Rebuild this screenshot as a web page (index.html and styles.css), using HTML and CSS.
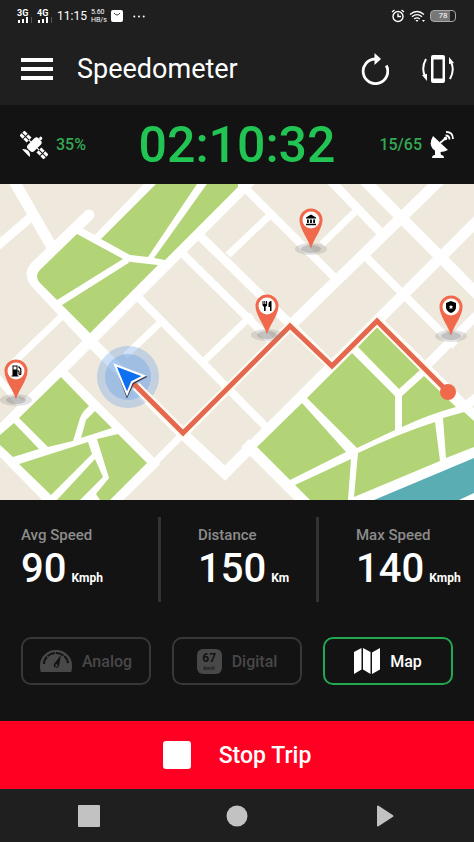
FILE: index.html
```html
<!DOCTYPE html>
<html lang="en">
<head>
  <meta charset="UTF-8">
  <meta name="viewport" content="width=device-width, initial-scale=1.0">
  <title>Speedometer</title>
  <link rel="stylesheet" href="styles.css">
</head>
<body>
  <div class="status-bar">
    <div class="status-group">
      <div class="signal">
        <span>3G</span>
        <svg width="16" height="6" viewBox="0 0 16 6"><path d="M1 3h2v3H1zM5 2h2v4H5zM9 0h2v6H9z" fill="#fff"/><path d="M14 0h1v6h-1z" fill="#555"/></svg>
      </div>
      <div class="signal">
        <span>4G</span>
        <svg width="16" height="6" viewBox="0 0 16 6"><path d="M1 3h2v3H1zM5 2h2v4H5zM9 0h2v6H9z" fill="#fff"/><path d="M14 0h1v6h-1z" fill="#555"/></svg>
      </div>
      <span class="clock">11:15</span>
      <div class="net-speed"><span>5.60</span><span>HB/s</span></div>
      <svg class="bag" width="12" height="12" viewBox="0 0 12 12"><rect width="12" height="12" rx="2" fill="#fff"/><path d="M3 3q3 4 6 0" fill="none" stroke="#333"/></svg>
      <svg width="12" height="3" viewBox="0 0 12 3" fill="#fff"><circle cx="1.3" cy="1.5" r="1"/><circle cx="6" cy="1.5" r="1"/><circle cx="10.7" cy="1.5" r="1"/></svg>
    </div>
    <div class="status-group">
      <svg width="14" height="14" viewBox="0 0 14 14" fill="none" stroke="#fff" stroke-width="1.4"><circle cx="7" cy="7.5" r="5"/><path d="M7 4.5v3h3M1 3l2.500-2M13 3l-2.500-2"/></svg>
      <svg width="17" height="13" viewBox="0 0 17 13" fill="none" stroke="#fff" stroke-width="1.3"><path d="M1 4.500q7-6 14 0M3 6.800q5-4.200 10 0M5.200 9q2.800-2.400 5.600 0"/><path d="M6.500 10h3L8 12zM13 10h3l-1.500 2z" fill="#fff" stroke="none"/></svg>
      <div class="battery">78</div>
    </div>
  </div>

  <header class="header">
    <button class="icon-btn" aria-label="Menu">
      <svg width="32" height="22" viewBox="0 0 32 22" fill="#fff"><path d="M0 0h32v4H0zM0 9h32v4H0zM0 18h32v4H0z"/></svg>
    </button>
    <h1>Speedometer</h1>
    <button class="icon-btn" aria-label="Reset">
      <svg width="28" height="32" viewBox="0 0 28 32"><path d="M25.300 12.500A12.300 12.300 0 1 1 14 6" fill="none" stroke="#fff" stroke-width="2.800"/><path d="M13.500 0l6.500 6-6.500 6z" fill="#fff"/></svg>
    </button>
    <button class="icon-btn" aria-label="Rotate screen">
      <svg width="32" height="28" viewBox="0 0 32 28"><path d="M11 0h10q2 0 2 2v24q0 2-2 2H11q-2 0-2-2V2q0-2 2-2zM11.500 4.500v19h9v-19z" fill="#fff" fill-rule="evenodd"/><path d="M4 4q-5 9-1 17M28 24q5-9 1-17" fill="none" stroke="#fff" stroke-width="2"/><path d="M0 20l5-1v7zM32 8l-5 1V2z" fill="#fff"/></svg>
    </button>
  </header>

  <section class="trip-time">
    <div class="signal-info">
      <svg width="28" height="28" viewBox="0 0 28 28" fill="#fff">
        <g transform="rotate(45 14 14)">
          <path d="M-3 10.500h4.500v3H-3zM-3 14.500h4.500v3H-3zM2.500 10.500H7v3H2.500zM2.500 14.500H7v3H2.500zM21 10.500h4.500v3H21zM21 14.500h4.500v3H21zM26.500 10.500H31v3h-4.500zM26.500 14.500H31v3h-4.500z"/>
          <path d="M7 13.500h14v1H7z"/>
          <rect x="9.500" y="6" width="9" height="15" rx="3"/>
          <path d="M9 24.500q5-5 10 0v1H9z"/>
          <circle cx="14" cy="4.500" r="1.600"/>
        </g>
      </svg>
      <span>35%</span>
    </div>
    <time class="timer">02:10:32</time>
    <div class="signal-info">
      <span>15/65</span>
      <svg width="24" height="28" viewBox="0 0 24 28" fill="#fff">
        <path d="M3 5q-5 9 1 14 6 4 14 0z"/>
        <path d="M5 18h5l1 6q3 0 3 3H2q0-3 3-3z"/>
        <path d="M10 12l6-5M15.500 4.500q4 0 4 4M16 .900q7 0 7 7" fill="none" stroke="#fff" stroke-width="1.800"/>
        <circle cx="15.500" cy="7.500" r="1.800"/>
      </svg>
    </div>
  </section>

  <svg class="map" viewBox="0 0 474 316" role="img" aria-label="Trip map">
    <defs>
      <g id="pin">
        <ellipse cy="29" rx="16" ry="6" fill="#8a8a8a" opacity=".25"/>
        <ellipse cy="29" rx="10" ry="4" fill="#777" opacity=".3"/>
        <path d="M0 28.500C-2 20-11.500 9-11.500 0a11.500 11.500 0 0 1 23 0C11.500 9 2 20 0 28.500z" fill="#f0694c"/>
        <circle r="8.500" fill="#fff"/>
      </g>
    </defs>

    <rect width="474" height="316" fill="#eee8dd"/>

    <!-- park and shore ground -->
    <g fill="#fff">
      <path d="M61 188L153 280 116 318 46 320-4 269v-20z"/>
      <path d="M377 137L480 238v80H304L247 261z"/>
    </g>

    <!-- streets -->
    <g fill="none" stroke="#fff">
      <g stroke-width="11">
        <path d="M14-3L53 65M440-4L291 141M480 34L225 289 183 250M364-4L480 113M255-8L-4 251"/>
        <path d="M89 31L36 82Q28 90 36 99L90 157 183 250" stroke-linecap="round"/>
        <path d="M377 137L480 238M245 259L304 318"/>
      </g>
      <g stroke-width="9">
        <path d="M-4 63L31 33M152-2L98 54M198 50L291 141 332 182M330-4L382 50M291 141L183 250M61 187L154 280 114 319"/>
        <path d="M480 128L399 209M480 211L460 226"/>
      </g>
      <g stroke-width="8">
        <path d="M183 70L273 159M79 47L128 73 163 79M203-2L151 74M127 76L60 118"/>
        <path d="M138 113L266 243M240-1L336 95M365 72L455 162"/>
      </g>
      <g stroke-width="7">
        <path d="M228 71L269 32M355 28L322 60M162 137L125 172M252 131L202 179M62 132L12 180M-4 192L20 220M183 250L153 280"/>
      </g>
    </g>

    <!-- parks -->
    <g fill="#b2d476">
      <path d="M156 0H197L148 73 130 71 101 55z"/>
      <path d="M207 0H238V3L165 76 154 74z"/>
      <path d="M77 50L123 75 57 116 40 99Q34 92 40 86z"/>
      <path d="M130 78L158 81 90 149 62 121z"/>
      <path d="M61 193L89 222Q82 228 80 234L73 257 48 263 19 234z"/>
      <path d="M95 227L112 244 81 254 86 236z"/>
      <path d="M14 239L39 265 13 273 0 261V251z"/>
      <path d="M19 280L88 258 92 270 51 311z"/>
      <path d="M97 255L118 250 147 279 110 316H100L96 310 109 294z"/>
      <path d="M95 275L103 293 80 316H57z"/>
      <path d="M352 169L395 212V246L357 264 307 214z"/>
      <path d="M377 143L420 186 399 205 358 163z"/>
      <path d="M424 192L456 223Q430 230 402 243V212z"/>
      <path d="M302 219L346 268 290 296 257 263z"/>
      <path d="M351 275L348 316H310L295 301z"/>
      <path d="M358 269Q398 250 435 238L440 277 354 313z"/>
      <path d="M443 234L464 228 474 237V263L446 274z"/>
    </g>
    <path d="M474 274V309L459 316H374Z" fill="#5aaeb3"/>

    <!-- current position -->
    <circle cx="128" cy="193" r="31" fill="#6fa3e6" opacity=".35"/>
    <circle cx="128" cy="193" r="23" fill="#6fa3e6" opacity=".4"/>

    <!-- route -->
    <g fill="none">
      <path d="M136 202L183 249 290 142 332 182 377 137 448 208" stroke="#fffaf0" stroke-width="9"/>
      <path d="M132 198L183 249 290 142 332 182 377 137 448 208" stroke="#e5674d" stroke-width="5"/>
    </g>
    <circle cx="448" cy="208" r="8" fill="#f0694c"/>

    <path d="M116 182L145 193 133 199 127 212z" fill="#334" stroke="#334" stroke-width="2"/>
    <path d="M115 181L144 192 132 198 127 210z" fill="#0d6ff2" stroke="#fff" stroke-width="2"/>

    <!-- places -->
    <g transform="translate(311 36)">
      <use href="#pin"/>
      <path d="M-5-2.500L0-5.500 5-2.500v1H-5zM-4-.500h1.800v3.500H-4zM-.900-.500H.900v3.500H-.900zM2.200-.500H4v3.500H2.200zM-5 3.800H5v1.400H-5z"/>
    </g>
    <g transform="translate(267 122)">
      <use href="#pin"/>
      <path d="M-4.500-5h1v3h.800v-3h1v3h.800v-3h1v4q0 1.300-1.500 1.800V5h-1.600V.800Q-4.500.300-4.500-1zM4.500-5V5H3V1H1.500v-3q0-3 3-3z"/>
    </g>
    <g transform="translate(451 123)">
      <use href="#pin"/>
      <path d="M0-6L5-4V0Q5 4 0 6-5 4-5 0v-4z"/>
      <path d="M0-2.200l.700 1.400 1.500.200L1.100.400l.300 1.600L0 1.200-1.400 2l.300-1.600-1.100-1 1.500-.200z" fill="#fff"/>
    </g>
    <g transform="translate(16 187)">
      <use href="#pin"/>
      <path d="M-3.500-5.500h5v10h1V5.500h-7v-1h1zM-2.500-4.500v3h3v-3z" fill-rule="evenodd"/>
      <path d="M1.500 0q2-.500 1.500 3 1 1.500 1.800 0V-2L2.500-4.500" fill="none" stroke="#000" stroke-width="1.200"/>
    </g>
  </svg>

  <section class="stats">
    <div class="stat">
      <div class="stat-label">Avg Speed</div>
      <div class="stat-value">90 <small>Kmph</small></div>
    </div>
    <div class="stat">
      <div class="stat-label">Distance</div>
      <div class="stat-value">150 <small>Km</small></div>
    </div>
    <div class="stat">
      <div class="stat-label">Max Speed</div>
      <div class="stat-value">140 <small>Kmph</small></div>
    </div>
  </section>

  <nav class="modes">
    <button class="mode">
      <svg width="32" height="24" viewBox="0 0 32 24">
        <path d="M1 23q-1-1-1-7a16 15 0 0 1 32 0q0 6-1 7z" fill="#484848"/>
        <path d="M4 15a12 11 0 0 1 24 0" fill="none" stroke="#131313" stroke-width="2" stroke-dasharray="8 1"/>
        <path d="M21 6l-2 11q-1 2.500-3.500 1.500T14 15z" fill="#131313"/>
        <circle cx="16.500" cy="16.500" r="1.200" fill="#484848"/>
      </svg>
      Analog
    </button>
    <button class="mode">
      <span class="digital-icon"><b>67</b><i>km/h</i></span>
      Digital
    </button>
    <button class="mode active">
      <svg width="26" height="26" viewBox="0 0 26 26" fill="#fff"><path d="M0 4l7.500-4v21.500L0 26zM9 0l7.500 4v22L9 21.500zM18 4.500L26 0v21.500L18 26z"/></svg>
      Map
    </button>
  </nav>

  <button class="stop-btn"><span class="stop-icon"></span>Stop Trip</button>

  <nav class="system-nav">
    <button class="icon-btn" aria-label="Recent apps">
      <svg width="22" height="22" viewBox="0 0 22 22"><rect width="22" height="22" rx="1" fill="#c2c2c2"/></svg>
    </button>
    <button class="icon-btn" aria-label="Home">
      <svg width="22" height="22" viewBox="0 0 22 22"><circle cx="11" cy="11" r="10.500" fill="#c2c2c2"/></svg>
    </button>
    <button class="icon-btn" aria-label="Back">
      <svg width="22" height="22" viewBox="0 0 22 22"><path d="M4 1.500v19L18.500 11z" fill="#c2c2c2" stroke="#c2c2c2" stroke-width="2" stroke-linejoin="round"/></svg>
    </button>
  </nav>
</body>
</html>
```
FILE: styles.css
```css
* {
  box-sizing: border-box;
}

body {
  margin: 0;
  min-height: 100vh;
  display: flex;
  flex-direction: column;
  font-family: Roboto, 'Liberation Sans', sans-serif;
  background-color: #131313;
  color: #fff;
}

svg {
  display: block;
  flex-shrink: 0;
}

button {
  font-family: inherit;
  color: inherit;
  cursor: pointer;
}

.icon-btn {
  padding: 0;
  border: none;
  background: none;
}

/* Status bar */
.status-bar {
  display: flex;
  justify-content: space-between;
  height: 32px;
  padding: 0 18px 0 17px;
  background-color: #1f1f1f;
}

.status-group {
  display: flex;
  align-items: center;
  gap: 4px;
}

.signal {
  font-size: 9px;
  font-weight: 700;
  line-height: 8px;
}

.clock {
  font-size: 12px;
}

.net-speed {
  display: flex;
  flex-direction: column;
  font-size: 7px;
  line-height: 8px;
}

.bag {
  margin: 0 6px 0 0;
}

.battery {
  width: 26px;
  height: 12px;
  border: 1px solid #aaa;
  border-radius: 4px;
  background: linear-gradient(to right, #777 78%, #1f1f1f 78%);
  font-size: 8px;
  line-height: 10px;
  text-align: center;
}

/* Header */
.header {
  display: flex;
  align-items: center;
  height: 73px;
  padding: 0 20px 0 21px;
  background-color: #1f1f1f;
}

.header h1 {
  flex: 1;
  margin: 0 0 0 24px;
  font-size: 27px;
  font-weight: 400;
}

.header .icon-btn + .icon-btn {
  margin-left: 33px;
}

/* Trip time */
.trip-time {
  display: flex;
  align-items: center;
  justify-content: space-between;
  height: 79px;
  padding: 0 20px;
  color: #22c553;
}

.signal-info {
  flex: 1;
  display: flex;
  align-items: center;
  gap: 8px;
  font-size: 16px;
  font-weight: 500;
  color: #34a853;
}

.signal-info:last-child {
  justify-content: flex-end;
}

.timer {
  font-size: 50px;
  font-weight: 500;
  line-height: 60px;
}

/* Map */
.map {
  width: 100%;
  height: auto;
}

/* Stats */
.stats {
  display: grid;
  grid-template-columns: repeat(3, 1fr);
  padding: 17px 0;
}

.stat {
  height: 85px;
  padding: 8px 0 0 21px;
}

.stat + .stat {
  padding-left: 37px;
  border-left: 3px solid #333;
}

.stat-label {
  font-size: 15px;
  font-weight: 500;
  line-height: 20px;
  color: #8c8c8c;
}

.stat-value {
  display: flex;
  align-items: baseline;
  gap: 5px;
  font-size: 40px;
  font-weight: 500;
  line-height: 48px;
  white-space: nowrap;
}

.stat-value small {
  font-size: 12px;
  font-weight: 700;
}

/* View modes */
.modes {
  display: grid;
  grid-template-columns: repeat(3, 1fr);
  gap: 21px;
  padding: 18px 21px 36px;
}

.mode {
  display: flex;
  align-items: center;
  justify-content: center;
  gap: 10px;
  height: 48px;
  padding: 0;
  border: 2px solid #383838;
  border-radius: 10px;
  background: none;
  color: #484848;
  font-size: 16px;
  font-weight: 500;
}

.mode.active {
  border-color: #22a850;
  color: #fff;
}

.digital-icon {
  display: flex;
  flex-direction: column;
  align-items: center;
  width: 25px;
  height: 25px;
  padding-top: 2px;
  border-radius: 6px;
  background-color: #484848;
  color: #131313;
}

.digital-icon b {
  font-size: 12px;
  line-height: 14px;
}

.digital-icon i {
  font-size: 5px;
  line-height: 7px;
}

/* Stop button */
.stop-btn {
  display: flex;
  align-items: center;
  justify-content: center;
  gap: 28px;
  height: 68px;
  border: none;
  background-color: #ff0022;
  font-size: 23px;
  font-weight: 500;
}

.stop-icon {
  width: 28px;
  height: 28px;
  border-radius: 3px;
  background-color: #fff;
}

/* System navigation */
.system-nav {
  flex: 1;
  display: flex;
  align-items: center;
  justify-content: space-between;
  min-height: 53px;
  padding: 0 78px;
  background-color: #1f1f1f;
}
```
